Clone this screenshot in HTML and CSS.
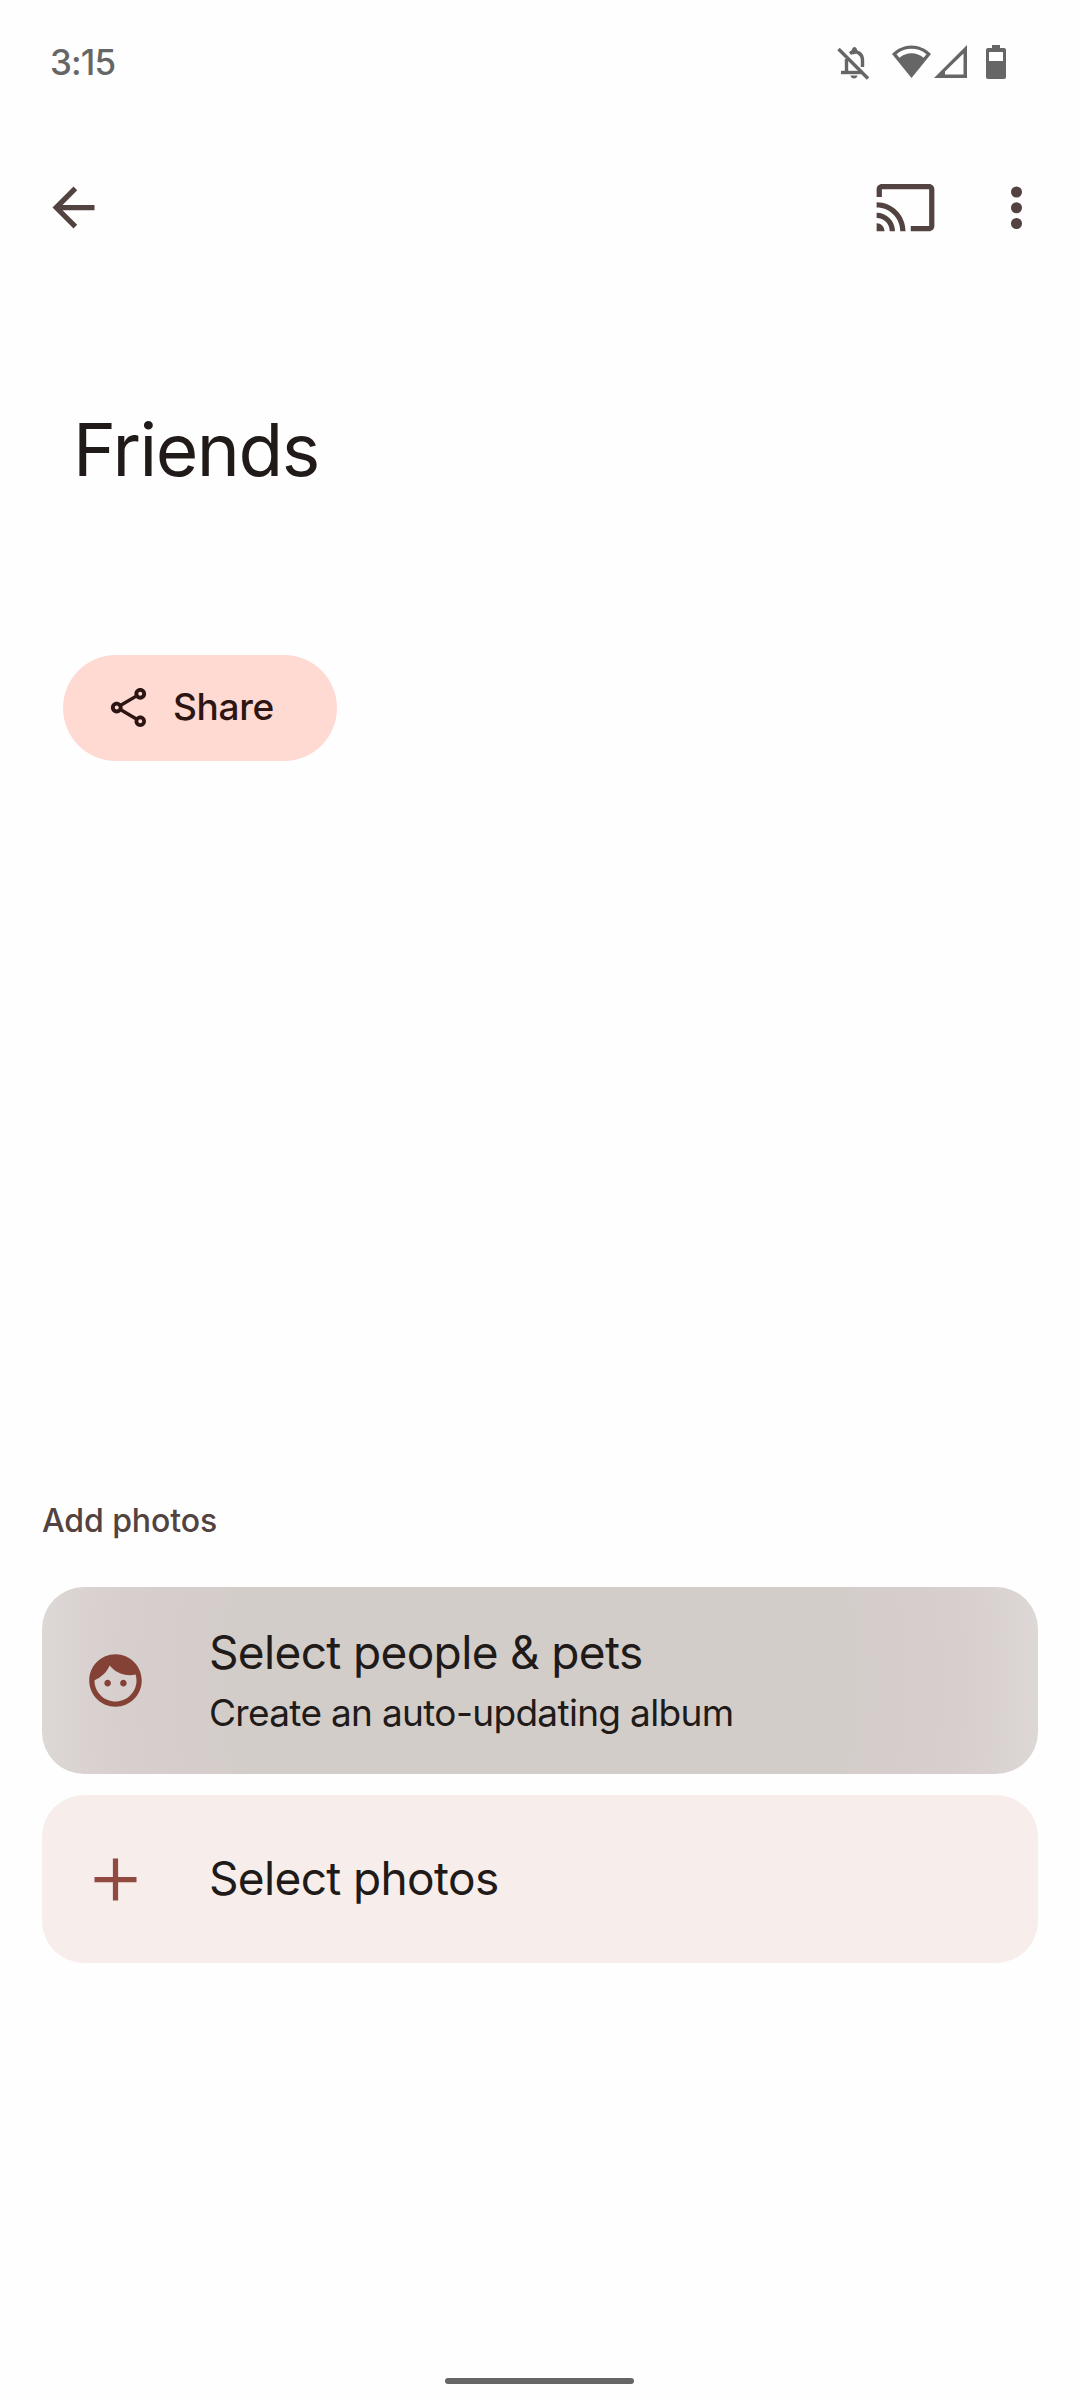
FILE: index.html
```html
<!DOCTYPE html>
<html lang="en">
<head>
<meta charset="utf-8">
<title>Friends</title>
<link rel="stylesheet" href="styles.css">
</head>
<body>
<div class="screen">
  <header class="status">
    <span class="clock">3:15</span>
    <svg class="status-icons" viewBox="830 40 190 44" aria-hidden="true">
      <g fill="none" stroke="#666" stroke-width="3.4">
        <path d="M838.5 49 868 78.5"/>
        <path d="M841 72.500h22"/>
        <path d="M846.500 72V59"/>
        <path d="M850 53.500c7-4.500 12.500 1 12.500 6.500v7"/>
      </g>
      <path fill="#666" d="M849.500 52.500c0-1 2-1.500 2.500-3 .5-3.500 4.500-3.500 5 0l1 3-5 2zM850.500 75.500h7c-.5 4-6.500 4-7 0z"/>
      <path fill="#666" fill-rule="evenodd" d="M892 54C903 42.500 920 42.500 931 54L911.500 78zM896.500 54.300 899.500 57.800C906 51.600 917 51.600 923.500 57.800L926.500 54.300C918 47 905 47 896.500 54.300z"/>
      <path fill="#666" fill-rule="evenodd" d="M967 45v33h-33zM963.500 53.500 945 71.500v3h18.500z"/>
      <path fill="#666" fill-rule="evenodd" d="M992 45h8v3h4q2 0 2 2v27q0 2-2 2h-16q-2 0-2-2V50q0-2 2-2h4zM989 52v9h14v-9z"/>
    </svg>
  </header>

  <nav class="toolbar">
    <svg class="icon" viewBox="0 0 24 24"><path d="M20 11H7.830l5.590-5.590L12 4l-8 8 8 8 1.410-1.410L7.830 13H20z"/></svg>
    <div class="actions">
      <svg class="icon" viewBox="0 0 24 24"><path d="M21 3H3c-1.100 0-2 .9-2 2v3h2V5h18v14h-7v2h7c1.100 0 2-.9 2-2V5c0-1.100-.9-2-2-2zM1 18v3h3c0-1.660-1.340-3-3-3zm0-4v2c2.760 0 5 2.240 5 5h2c0-3.870-3.130-7-7-7zm0-4v2c4.970 0 9 4.030 9 9h2c0-6.080-4.930-11-11-11z"/></svg>
      <svg class="icon" viewBox="0 0 24 24"><circle cx="12" cy="6.100" r="2.100"/><circle cx="12" cy="12.100" r="2.100"/><circle cx="12" cy="18.100" r="2.100"/></svg>
    </div>
  </nav>

  <h1 class="title">Friends</h1>

  <button class="share">
    <svg class="share-icon" viewBox="0 0 24 24"><path d="M18 16.080c-.76 0-1.440.3-1.960.77L8.910 12.700c.05-.23.09-.46.09-.7s-.04-.47-.09-.7l7.050-4.110c.54.5 1.250.81 2.040.81 1.660 0 3-1.340 3-3s-1.340-3-3-3-3 1.340-3 3c0 .24.040.47.090.7L8.040 9.810C7.500 9.310 6.790 9 6 9c-1.660 0-3 1.340-3 3s1.340 3 3 3c.79 0 1.500-.31 2.040-.81l7.120 4.160c-.05.21-.08.43-.08.65 0 1.610 1.310 2.920 2.920 2.920s2.920-1.310 2.920-2.920-1.310-2.920-2.920-2.920zM18 4c.55 0 1 .45 1 1s-.45 1-1 1-1-.45-1-1 .45-1 1-1zM6 13c-.55 0-1-.45-1-1s.45-1 1-1 1 .45 1 1-.45 1-1 1zm12 7.020c-.55 0-1-.45-1-1s.45-1 1-1 1 .45 1 1-.45 1-1 1z"/></svg>
    <span class="share-label">Share</span>
  </button>

  <section class="add">
    <h2 class="add-title">Add photos</h2>
    <div class="card people">
      <svg class="icon" viewBox="0 0 24 24"><path d="M10.250 13c0 .69-.56 1.250-1.250 1.250S7.750 13.690 7.750 13s.56-1.250 1.250-1.250 1.250.56 1.250 1.250zM15 11.750c-.69 0-1.250.56-1.250 1.250s.56 1.250 1.250 1.250 1.250-.56 1.250-1.250-.56-1.250-1.250-1.250zm7 .25c0 5.520-4.480 10-10 10S2 17.520 2 12 6.480 2 12 2s10 4.480 10 10zm-2 0c0-.78-.12-1.530-.33-2.240-.7.150-1.420.24-2.170.24-3.130 0-5.920-1.440-7.760-3.690C8.690 8.870 6.600 10.880 4 11.860c.01.040 0 .09 0 .14 0 4.410 3.590 8 8 8s8-3.590 8-8z"/></svg>
      <div class="lines">
        <span class="card-title people-title">Select people &amp; pets</span>
        <span class="card-sub">Create an auto-updating album</span>
      </div>
    </div>
    <div class="card photos">
      <svg class="icon" viewBox="0 0 24 24"><path d="M20 13h-7v7h-2v-7H4v-2h7V4h2v7h7z"/></svg>
      <span class="card-title photos-title">Select photos</span>
    </div>
  </section>

  <footer class="nav-area"><div class="home-bar"></div></footer>
</div>
</body>
</html>
```
FILE: styles.css
```css
* { box-sizing: border-box; margin: 0; padding: 0; }
body { background: #fefefe; font-family: Inter, Roboto, sans-serif; color: #201a18; }
.screen { width: 1080px; height: 2400px; display: flex; flex-direction: column; background: #fefefe; overflow: hidden; }
span, h1, h2 { white-space: nowrap; }

.status { height: 124px; padding: 0 60px 0 50px; display: flex; justify-content: space-between; align-items: center; flex: none; }
.clock { font-size: 35px; line-height: 40px; font-weight: 500; letter-spacing: -0.9px; color: #666; }
.status-icons { width: 190px; height: 44px; }

.toolbar { height: 167px; padding: 0 32px 0 42px; display: flex; justify-content: space-between; align-items: center; color: #534340; flex: none; }
.actions { display: flex; gap: 48px; }
.icon { width: 63px; height: 63px; fill: currentColor; display: block; flex: none; }

.title { margin: 109px 0 0 73px; height: 100px; line-height: 100px; font-size: 73px; font-weight: 400; letter-spacing: -1.5px; }

.share { margin: 155px 0 0 63px; width: 274px; height: 106px; border: 0; border-radius: 53px; background: #ffdad3; color: #2c1512; display: flex; align-items: center; padding: 0 0 2px 42px; gap: 21px; font-family: inherit; flex: none; }
.share-icon { width: 47px; height: 47px; fill: currentColor; }
.share-label { font-size: 37px; line-height: 48px; font-weight: 500; letter-spacing: -0.3px; }

.add { margin-top: 730px; padding: 0 42px; display: flex; flex-direction: column; }
.add-title { height: 60px; line-height: 60px; font-size: 32px; font-weight: 500; letter-spacing: -0.1px; color: #534340; margin-bottom: 36px; }
.card { display: flex; align-items: center; gap: 62px; padding-left: 42px; border-radius: 42px; color: #904a40; }
.people { height: 187px; margin-bottom: 21px; background: radial-gradient(circle at 498px 93px, #d3cdca 310px, #d5cdcb 350px, #d6cfcd 420px, #d9d2d0 460px, #ddd7d5 500px); color: #844136; }
.photos { height: 168px; background: #f7eeec; }
.lines { display: flex; flex-direction: column; padding-top: 5px; }
.card-title { font-size: 46px; line-height: 60px; color: #201a18; letter-spacing: -0.65px; }
.card-sub { font-size: 37px; line-height: 62px; color: #201a18; letter-spacing: -0.68px; }
.photos-title { padding-bottom: 2px; }

.nav-area { margin-top: auto; padding: 0 1px 16px 0; display: flex; justify-content: center; }
.home-bar { width: 189px; height: 6px; border-radius: 3px; background: #666; }
```
